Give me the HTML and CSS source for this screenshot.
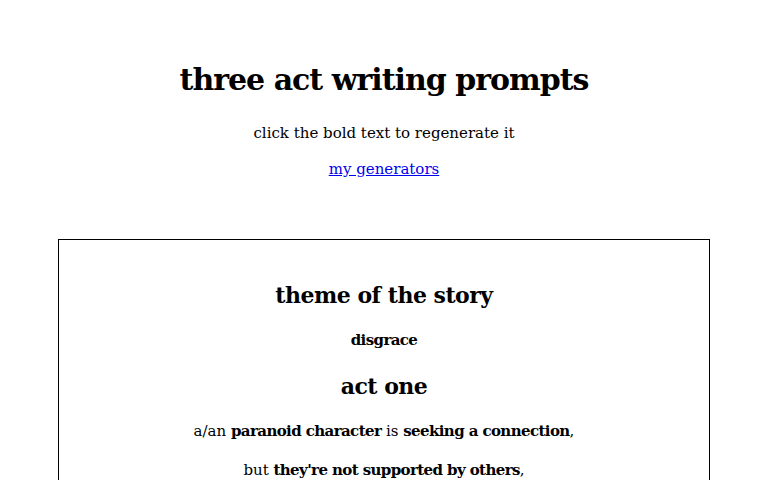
FILE: index.html
```html
<!DOCTYPE html>
<html lang="en">

<head>
    <meta charset="UTF-8">
    <meta name="viewport" content="width=device-width, initial-scale=1.0">
    <title>three act writing prompts</title>
    <link rel="stylesheet" href="styles.css">
</head>

<body>
    <header class="page-header">
        <h1>three act writing prompts</h1>
        <p>click the bold text to regenerate it</p>
        <p><a href="#">my generators</a></p>
    </header>

    <main class="prompt-box">
        <h2>theme of the story</h2>
        <p><b class="regen">disgrace</b></p>

        <h2>act one</h2>
        <p>a/an <b class="regen">paranoid character</b> is <b class="regen">seeking a connection</b>,</p>
        <p>but <b class="regen">they're not supported by others</b>,</p>
    </main>
</body>

</html>
```

FILE: styles.css
```css
body {
    margin: 0;
    padding-top: 8px;
    font-family: "DejaVu Serif", serif;
    font-size: 15px;
    color: black;
    background: white;
    text-align: center;
}

.page-header {
    padding-top: 31px;
}

h1 {
    font-size: 30px;
    line-height: 40px;
    letter-spacing: -1px;
    margin: 21px 0 23px;
}

h2 {
    font-size: 22px;
    line-height: 30px;
    letter-spacing: -0.5px;
    margin: 19px 0;
}

p {
    margin: 16px 0;
    line-height: 20px;
}

a {
    color: #0000ee;
}

.prompt-box {
    width: 85%;
    margin: 60px auto 0;
    padding: 21px 20px;
    box-sizing: border-box;
    border: 1px solid black;
}

.prompt-box p {
    line-height: 23px;
}

.regen {
    letter-spacing: -0.6px;
    cursor: pointer;
}
```
